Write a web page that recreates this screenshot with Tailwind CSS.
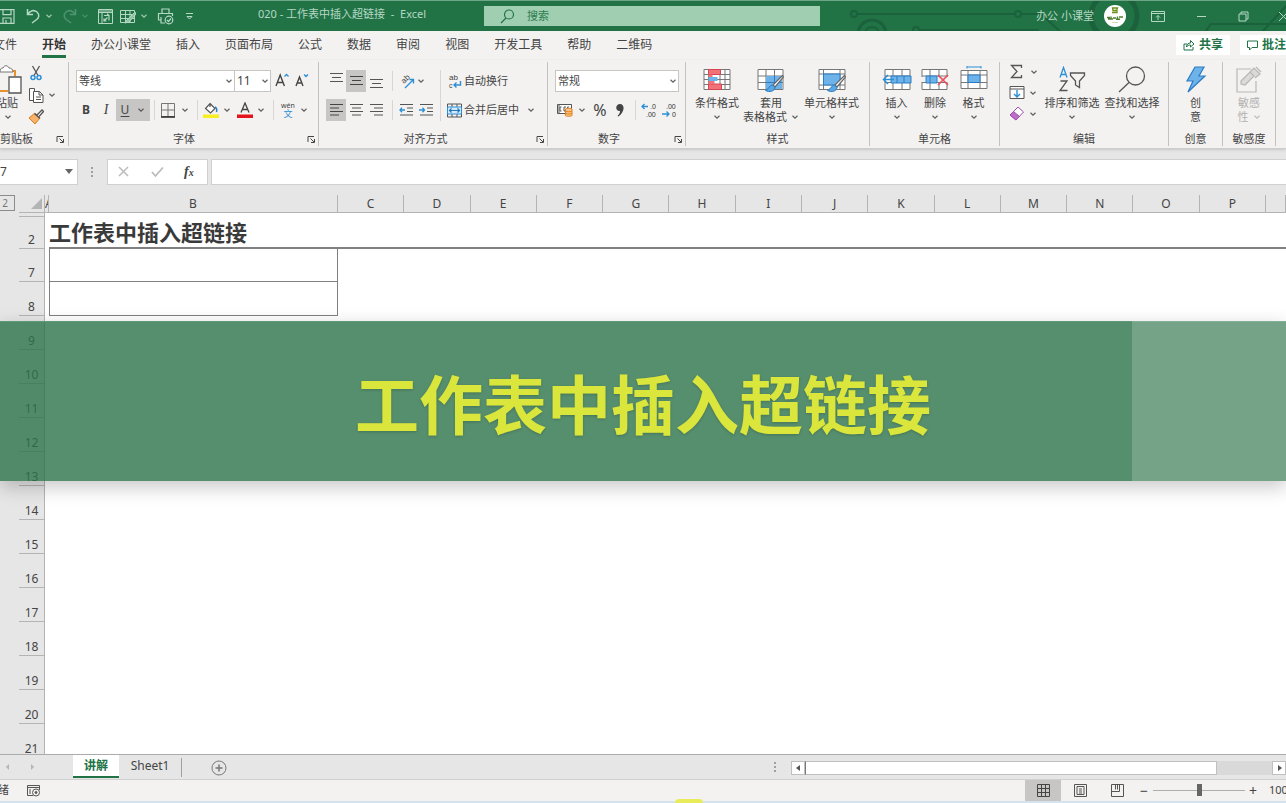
<!DOCTYPE html>
<html lang="zh-CN">
<head>
    <meta charset="UTF-8">
    <meta name="viewport" content="width=device-width, initial-scale=1.0">
    <script src="https://cdn.jsdelivr.net/npm/@tailwindcss/browser@4"></script>
    <title>020 - 工作表中插入超链接 - Excel</title>
</head>
<body class="font-['Noto_Sans','Noto_Sans_CJK_SC',sans-serif] text-[#444] bg-[#e6e6e6]">
    <svg class="hidden">
        <symbol id="chev" viewBox="0 0 8 8"><path d="M1.500 2.800 4 5.200 6.500 2.800" fill="none" stroke="currentColor" stroke-width="1.200" opacity=".85"/></symbol>
        <symbol id="launcher" viewBox="0 0 9 9"><path d="M1 7V1.500H7M3.500 3.500 7 7M7.500 4v3.500H4" fill="none" stroke="currentColor"/></symbol>
        <symbol id="brush" viewBox="0 0 20 20"><path d="M18.500 1.500 9 11l2 2 8.500-10z" fill="#fff" stroke="#666" stroke-width="1.200"/><path d="M8.500 11c-3 0-3 3.500-7 5.500 4 2 9 1 9.500-3z" fill="#5aa7e4" stroke="#2b7cc4"/></symbol>
    </svg>

    <div class="relative h-screen flex flex-col overflow-hidden">
        <!-- title bar -->
        <header class="relative h-[31px] shrink-0 bg-[#217346] border-t border-[#6fa587] flex items-center text-[#b5d8c3] text-[11px] overflow-hidden">
            <svg class="absolute right-0 top-0" width="446" height="31" viewBox="840 0 446 31" fill="none" stroke="#1b613b" stroke-width="2">
                <circle cx="854" cy="13" r="3"/><path d="M857 13h158"/><circle cx="1018" cy="13" r="3"/><path d="M1021 13h20l22 20"/>
                <circle cx="872" cy="33" r="14" stroke-width="3"/><circle cx="872" cy="33" r="7"/><circle cx="916" cy="29" r="3"/><path d="M919 29h120"/>
                <circle cx="1114" cy="15" r="23" stroke-width="5"/><path d="M1205 31l6-8h75M1262 31l24-26"/>
            </svg>
            <div class="relative w-[200px] h-full shrink-0 flex items-center">
                <button class="w-[22px]" aria-label="保存"><svg width="15" height="15" viewBox="0 0 15 15" fill="none" stroke="currentColor" stroke-width="1.200"><path d="M-1 .6h15v13.800H-1zM3 .6v5h8v-5M3 14V9h8v5M6 14v-3"/></svg></button>
                <button class="flex items-center gap-1 w-[38px] pl-1" aria-label="撤消"><svg width="15" height="16" viewBox="0 0 15 16" fill="none" stroke="currentColor" stroke-width="1.500"><path d="M1.500 1v5.500H7M1.500 6.500C4 2.500 8 1.500 11 4c3 3 2 6-1 8l-4 3"/></svg><svg width="8" height="8"><use href="#chev"/></svg></button>
                <button class="flex items-center gap-1 w-[37px] pl-[2px] text-[#4f9470]" aria-label="恢复"><svg width="15" height="16" viewBox="0 0 15 16" fill="none" stroke="currentColor" stroke-width="1.500"><path d="M13.500 1v5.500H8M13.500 6.500C11 2.500 7 1.500 4 4c-3 3-2 6 1 8l4 3"/></svg><svg width="8" height="8"><use href="#chev"/></svg></button>
                <button class="w-[23px] pl-px" aria-label="选择窗格"><svg width="15" height="15" viewBox="0 0 15 15" fill="none" stroke="currentColor"><path d="M.5.5h14v14H.5zM.5 3.500h14M4 3.500v11M1 2h13" /><path d="M6 6.500h5v5M9 4.800 11 6.500M9.500 8.500 6 12M6 9.500V12h2.500" stroke-width="1.200"/></svg></button>
                <button class="flex items-center gap-1 w-[37px]" aria-label="编辑表格"><svg width="16" height="15" viewBox="0 0 16 15" fill="none" stroke="currentColor"><path d="M.5 1.500h14v12H.5zM.5 5.500h14M.5 9.500h14M5.500 1.500v12M10 1.500v12"/><path d="M15 3 7 11l-2 3 4-1 7-8z" fill="#8fc2a4"/></svg><svg width="8" height="8"><use href="#chev"/></svg></button>
                <button class="w-[28px]" aria-label="打印预览"><svg width="17" height="17" viewBox="0 0 17 17" fill="none" stroke="currentColor" stroke-width="1.200"><path d="M5 5V1h7v4M4 12H1.500V5.500h14V8M4 9v6h4"/><circle cx="12" cy="12" r="3.800"/><path d="m10 12 1.500 1.500 2.500-3"/></svg></button>
                <button aria-label="自定义快速访问工具栏"><svg width="9" height="9" viewBox="0 0 9 9" fill="none" stroke="currentColor"><path d="M1 1.500h7M2 4.500l2.500 2.500L7 4.500z"/></svg></button>
            </div>
            <div class="relative w-[284px] shrink-0 text-center leading-4 pb-1 whitespace-pre">020 - 工作表中插入超链接  -  Excel</div>
            <label class="relative flex-1 h-5 bg-[#a0ceb0] flex items-center gap-3 pl-4 text-[#217346]">
                <svg width="15" height="15" viewBox="0 0 15 15" fill="none" stroke="currentColor" stroke-width="1.200"><circle cx="9" cy="5.500" r="4.500"/><path d="M6 9 1 14"/></svg>
                <input type="text" placeholder="搜索" aria-label="搜索" class="flex-1 min-w-0 bg-transparent outline-none placeholder:text-[#2c7d50]">
            </label>
            <div class="relative w-[466px] shrink-0 flex items-center justify-end">
                <span class="leading-4 pr-[10px]">办公 小课堂</span>
                <svg class="mr-[25px]" width="22" height="22" viewBox="0 0 22 22"><circle cx="11" cy="11" r="11" fill="#fff"/><path d="M8.500 3h5l-1 2.500H9zM8 7.500h5V5" fill="none" stroke="#6c8f1c" stroke-width="1.300"/><path d="M3 12.500h3M7 11.500v3M9 13h3M13.500 11.500v2.500M15 12h4M4 14h5M12 14.200h4" stroke="#4b7d2c" stroke-width="1.400"/><path d="M8 17.500h6" stroke="#cddfab"/></svg>
                <button class="w-[45px]" aria-label="功能区显示选项"><svg width="14" height="11" viewBox="0 0 14 11" fill="none" stroke="currentColor"><path d="M.5.5h13v10H.5zM.5 2.500h13M7 9V4.500M5 6.500l2-2 2 2"/></svg></button>
                <button class="w-10" aria-label="最小化"><svg width="11" height="11" viewBox="0 0 11 11" stroke="currentColor"><path d="M1 5.500h9"/></svg></button>
                <button class="w-[42px] pl-[2px]" aria-label="还原"><svg width="11" height="11" viewBox="0 0 11 11" fill="none" stroke="currentColor"><path d="M1 3h7v7H1zM3 3V1h7v7H8"/></svg></button>
                <button class="w-[8px]" aria-label="关闭"><svg width="11" height="11" viewBox="0 0 11 11" stroke="currentColor"><path d="m1 1 9 9M10 1l-9 9"/></svg></button>
            </div>
        </header>

        <!-- ribbon tabs -->
        <nav class="h-[29px] shrink-0 bg-[#f3f2f1] flex items-center gap-[25px] pb-px text-xs leading-5 whitespace-nowrap overflow-hidden">
            <a href="#" class="-ml-[7px]">文件</a>
            <a href="#" class="font-bold text-[#333] relative">开始<span class="absolute -bottom-[3px] inset-x-0 h-[3px] bg-[#217346]"></span></a>
            <a href="#">办公小课堂</a>
            <a href="#">插入</a>
            <a href="#">页面布局</a>
            <a href="#">公式</a>
            <a href="#">数据</a>
            <a href="#">审阅</a>
            <a href="#">视图</a>
            <a href="#">开发工具</a>
            <a href="#">帮助</a>
            <a href="#">二维码</a>
            <div class="ml-auto flex gap-[10px] text-[#217346] font-bold">
                <button class="w-[54px] h-5 bg-white flex items-center justify-center gap-1"><svg width="12" height="12" viewBox="0 0 12 12" fill="none" stroke="currentColor"><path d="M4 5H1v6h9V8M3.500 8c0-3 2-4 4-4V1.500l3.500 3.500-3.500 3V6c-2 0-3 .5-4 2z"/></svg>共享</button>
                <button class="w-[46px] h-5 bg-white flex items-center pl-[7px] gap-1"><svg class="shrink-0" width="11" height="11" viewBox="0 0 11 11" fill="none" stroke="currentColor"><path d="M.5 1h10v6.500H5L2.500 10V7.500h-2z"/></svg>批注</button>
            </div>
        </nav>

        <!-- ribbon -->
        <section class="h-[89px] shrink-0 bg-[#f3f2f1] flex pt-[2px] pb-[2px] text-[11px] leading-[14px] whitespace-nowrap border-b border-[#cfcdcb] shadow overflow-hidden">
            <!-- clipboard -->
            <div class="w-[69px] shrink-0 border-r border-[#c4c2c0] flex flex-col">
                <div class="h-[71px] flex">
                    <button class="w-[22px] flex flex-col items-start pt-[3px]">
                        <svg width="22" height="31" viewBox="0 0 22 31" fill="none"><path d="M-2 6h17v5M-2 26h10" stroke="#e8912d" stroke-width="2"/><path d="M0 7h13c0-3-2-4-4-4-1-3-5-3-6 0-2 0-3 1-3 4z" fill="#fff" stroke="#777"/><path d="M9 12h12v16H9z" fill="#fff" stroke="#555" stroke-width="1.300"/></svg>
                        <span class="-ml-1">粘贴</span>
                        <svg class="ml-1" width="8" height="14"><use href="#chev"/></svg>
                    </button>
                    <div class="flex flex-col gap-[6px] pl-[6px] pt-[3px]">
                        <button aria-label="剪切"><svg width="16" height="16" viewBox="0 0 16 16" fill="none"><path d="M4.500 1 10 10.500M11.500 1 6 10.500" stroke="#555" stroke-width="1.300"/><circle cx="5" cy="12.500" r="2" stroke="#2b8fd6" stroke-width="1.500"/><circle cx="11" cy="12.500" r="2" stroke="#2b8fd6" stroke-width="1.500"/></svg></button>
                        <button class="flex items-center gap-1" aria-label="复制"><svg width="16" height="16" viewBox="0 0 16 16" fill="#fff" stroke="#555"><path d="M5 13.500H1.500v-12h5V4"/><path d="M5.500 4.500h6L15 8v7.500H5.500zM11 4.500V8h4M8 10h5M8 12.500h5"/></svg><svg width="8" height="8"><use href="#chev"/></svg></button>
                        <button aria-label="格式刷"><svg width="16" height="16" viewBox="0 0 16 16"><path d="M7 4 1 9l6 6 5-6z" fill="#f6b26b" stroke="#d87e1c"/><path d="m6.500 4.500 5.500 5M9 6l5-5 1.500 1.500-4.500 5" fill="#fff" stroke="#555" stroke-width="1.300"/></svg></button>
                    </div>
                </div>
                <div class="flex items-center justify-between pr-[3px]"><span>剪贴板</span><button aria-label="剪贴板设置"><svg width="9" height="9"><use href="#launcher"/></svg></button></div>
            </div>

            <!-- font -->
            <div class="w-[250px] shrink-0 border-r border-[#c4c2c0] flex flex-col">
                <div class="h-[71px] pl-[7px] pt-2">
                    <div class="flex items-center h-[22px]">
                        <span class="relative"><select aria-label="字体" class="appearance-none w-[159px] h-[22px] bg-white border border-[#c8c6c4] pl-[2px]"><option>等线</option></select><svg class="absolute right-[2px] top-[7px] pointer-events-none" width="8" height="8"><use href="#chev"/></svg></span>
                        <span class="relative"><select aria-label="字号" class="appearance-none w-[36px] h-[22px] bg-white border border-l-0 border-[#c8c6c4] pl-[2px] text-xs"><option>11</option></select><svg class="absolute right-[2px] top-[7px] pointer-events-none" width="8" height="8"><use href="#chev"/></svg></span>
                        <button class="ml-1" aria-label="增大字号"><svg width="14" height="18" viewBox="0 0 14 18" fill="none"><path d="M1 14 5.200 3 9.400 14M2.500 10.500h5.500" stroke="#444" stroke-width="1.400"/><path d="M9.500 4.500 11.500 2.500 13.500 4.500" stroke="#2b8fd6" stroke-width="1.300"/></svg></button>
                        <button class="ml-[6px]" aria-label="减小字号"><svg width="14" height="18" viewBox="0 0 14 18" fill="none"><path d="M1 14 4.500 5 8 14M2.300 11h4.500" stroke="#444" stroke-width="1.400"/><path d="M9 2.500 11 4.500 13 2.500" stroke="#2b8fd6" stroke-width="1.300"/></svg></button>
                    </div>
                    <div class="flex items-center h-[22px] mt-[7px]">
                        <button class="w-5 font-bold text-xs">B</button>
                        <button class="w-5 italic text-sm font-['Liberation_Serif',serif]">I</button>
                        <button class="w-[34px] h-[22px] bg-[#c8c6c4] flex items-center justify-center gap-2 text-xs"><span class="underline underline-offset-2">U</span><svg width="8" height="8"><use href="#chev"/></svg></button>
                        <span class="w-px h-5 bg-[#d8d6d4] mx-1"></span>
                        <button class="flex items-center gap-[6px] pl-[2px]" aria-label="边框"><svg width="14" height="15" viewBox="0 0 14 15" fill="none" stroke="#777"><path d="M.5.5h13v13H.5zM7 .5v13M.5 7h13"/><path d="M0 14h14" stroke="#333" stroke-width="1.600"/></svg><svg width="8" height="8"><use href="#chev"/></svg></button>
                        <span class="w-px h-5 bg-[#d8d6d4] ml-2 mr-[5px]"></span>
                        <button class="flex items-center gap-1" aria-label="填充颜色"><svg width="16" height="16" viewBox="0 0 16 16" fill="none"><path d="m7 1.500 5 5-4.500 4.500-5-4.500zM7 1.500V5" fill="#fff" stroke="#555" stroke-width="1.200"/><path d="M12 5c2 1 2 3 1.500 5" stroke="#2b7cc4" stroke-width="1.500"/><path d="M0 12.500h16V16H0z" fill="#f7ef22"/></svg><svg width="8" height="8"><use href="#chev"/></svg></button>
                        <button class="flex items-center gap-1 ml-[6px]" aria-label="字体颜色"><svg width="16" height="16" viewBox="0 0 16 16" fill="none"><path d="M4 10.500 8 1l4 9.500M5.500 7.500h5" stroke="#444" stroke-width="1.300"/><path d="M0 12.500h16V16H0z" fill="#e3141b"/></svg><svg width="8" height="8"><use href="#chev"/></svg></button>
                        <span class="w-px h-5 bg-[#d8d6d4] ml-2 mr-[6px]"></span>
                        <button class="flex items-center gap-1" aria-label="拼音"><span class="flex flex-col items-center w-4 text-[7px] leading-[7px]"><span>wén</span><span class="text-[#2b8fd6] text-[9px] leading-[9px]">文</span></span><svg width="8" height="8"><use href="#chev"/></svg></button>
                    </div>
                </div>
                <div class="flex items-center pr-[2px]"><span class="flex-1 text-center pr-3 pl-1">字体</span><button aria-label="字体设置"><svg width="9" height="9"><use href="#launcher"/></svg></button></div>
            </div>

            <!-- alignment -->
            <div class="w-[229px] shrink-0 border-r border-[#c4c2c0] flex flex-col">
                <div class="h-[71px] pl-[7px] pt-2 flex">
                    <div>
                        <div class="flex items-center h-[22px]">
                            <button class="w-5 h-[22px] flex justify-center items-start pt-[2px]" aria-label="顶端对齐"><svg width="14" height="12" stroke="#555"><path d="M1 1.500h13M3 5.500h9M1 9.500h13"/></svg></button>
                            <button class="w-5 h-[22px] flex justify-center items-center bg-[#c8c6c4]" aria-label="垂直居中"><svg width="14" height="12" stroke="#444"><path d="M1 1.500h13M3 5.500h9M1 9.500h13"/></svg></button>
                            <button class="w-5 h-[22px] flex justify-center items-end pb-[2px]" aria-label="底端对齐"><svg width="14" height="12" stroke="#555"><path d="M1 1.500h13M3 5.500h9M1 9.500h13"/></svg></button>
                            <span class="w-px h-5 bg-[#d8d6d4] mx-[6px]"></span>
                            <button class="flex items-center gap-[2px]" aria-label="方向"><svg class="overflow-visible font-['Liberation_Sans',sans-serif]" width="16" height="16" viewBox="0 0 16 16" fill="none"><text x="5" y="11" transform="rotate(-45 5 11)" font-size="8" fill="#444">ab</text><path d="m6 15 8.500-8.500M10.500 6.500h4v4" stroke="#2b8fd6" stroke-width="1.300"/></svg><svg width="8" height="8"><use href="#chev"/></svg></button>
                        </div>
                        <div class="flex items-center h-[22px] mt-[7px]">
                            <button class="w-5 h-[22px] flex justify-center items-center bg-[#c8c6c4]" aria-label="左对齐"><svg width="14" height="14" stroke="#444"><path d="M1 1.500h13M1 5h9M1 8.500h13M1 12h9"/></svg></button>
                            <button class="w-5 h-[22px] flex justify-center items-center" aria-label="居中"><svg width="14" height="14" stroke="#555"><path d="M1 1.500h13M3 5h9M1 8.500h13M3 12h9"/></svg></button>
                            <button class="w-5 h-[22px] flex justify-center items-center" aria-label="右对齐"><svg width="14" height="14" stroke="#555"><path d="M1 1.500h13M5 5h9M1 8.500h13M5 12h9"/></svg></button>
                            <span class="w-px h-5 bg-[#d8d6d4] mx-[6px]"></span>
                            <button class="w-5" aria-label="减少缩进"><svg width="14" height="14" fill="none" stroke="#555"><path d="M1 1.500h13M8 5h6M8 8.500h6M1 12h13"/><path d="M6 7H1M3 4.800 1 7l2 2.200" stroke="#2b8fd6" stroke-width="1.300"/></svg></button>
                            <button class="w-5" aria-label="增加缩进"><svg width="14" height="14" fill="none" stroke="#555"><path d="M1 1.500h13M8 5h6M8 8.500h6M1 12h13"/><path d="M0 7h5.500M3.500 4.800 5.500 7l-2 2.200" stroke="#2b8fd6" stroke-width="1.300"/></svg></button>
                        </div>
                    </div>
                    <span class="w-px h-[51px] bg-[#d8d6d4] ml-[1px] mr-[6px]"></span>
                    <div>
                        <button class="flex items-center gap-[2px] h-[22px]"><svg class="font-['Liberation_Sans',sans-serif]" width="15" height="16" viewBox="0 0 15 16" fill="none"><text x="2" y="7" font-size="8" fill="#444">ab</text><text x="2" y="15" font-size="7" fill="#444">c</text><path d="M13.500 8v4H7M9.500 9.500 7 12l2.500 2.500" stroke="#2b8fd6" stroke-width="1.400"/></svg>自动换行</button>
                        <button class="flex items-center gap-[2px] h-[22px] mt-[7px]"><svg width="15" height="15" viewBox="0 0 15 15" fill="none"><path d="M.5 1h14v13H.5zM5 1v3M10 1v3M5 11v3M10 11v3" stroke="#555"/><path d="M.5 4h14v7H.5z" fill="#d4eafa" stroke="#2b8fd6"/><path d="M2.500 7.500h10M4.500 5.500l-2 2 2 2M10.500 5.500l2 2-2 2" stroke="#2378b8" stroke-width="1.200"/></svg>合并后居中<svg class="ml-[6px]" width="8" height="8"><use href="#chev"/></svg></button>
                    </div>
                </div>
                <div class="flex items-center pr-[2px]"><span class="flex-1 text-center pr-1">对齐方式</span><button aria-label="对齐设置"><svg width="9" height="9"><use href="#launcher"/></svg></button></div>
            </div>

            <!-- number -->
            <div class="w-[138px] shrink-0 border-r border-[#c4c2c0] flex flex-col">
                <div class="h-[71px] pl-[7px] pt-2">
                    <span class="relative block w-[124px]"><select aria-label="数字格式" class="appearance-none w-full h-[22px] bg-white border border-[#c8c6c4] pl-[2px]"><option>常规</option></select><svg class="absolute right-[2px] top-[7px] pointer-events-none" width="8" height="8"><use href="#chev"/></svg></span>
                    <div class="flex items-center h-[22px] mt-[7px] pl-[2px]">
                        <button class="flex items-center gap-[5px]" aria-label="会计数字格式"><svg width="16" height="14" viewBox="0 0 16 14" fill="none"><path d="M.5 1.500h14v9H.5z" fill="#fff" stroke="#555"/><path d="M4.500 4H3v4h1.500M9 4H7v4h2M2 2v8M12 4h-1.500v3" stroke="#555"/><path d="M8.500 6c0-1 6.500-1 6.500 0v6.500c0 1-6.500 1-6.500 0z" fill="#f9c58a" stroke="#e07f17"/><path d="M8.500 8c2 1 4.500 1 6.500 0M8.500 10.300c2 1 4.500 1 6.500 0" stroke="#e07f17"/></svg><svg width="8" height="8"><use href="#chev"/></svg></button>
                        <button class="w-5 ml-1 text-base leading-5 text-center">%</button>
                        <button class="w-5 flex justify-center" aria-label="千位分隔"><svg width="8" height="13" viewBox="0 0 8 13"><path d="M4 0c5 0 5 8-1.500 12.500L1.500 12C4 9.500 4 8 4 7-1 7.500-1 0 4 0z" fill="#444"/></svg></button>
                        <span class="w-px h-5 bg-[#d8d6d4] mx-[5px]"></span>
                        <button class="w-5" aria-label="增加小数位"><svg class="font-['Liberation_Sans',sans-serif]" width="16" height="16" viewBox="0 0 16 16" fill="none"><text x="9" y="7" font-size="7" fill="#333">.0</text><text x="5" y="15" font-size="7" fill="#333">.00</text><path d="M7 4.500H1M3.500 2 1 4.500 3.500 7" stroke="#2b8fd6" stroke-width="1.300"/></svg></button>
                        <button class="w-5" aria-label="减少小数位"><svg class="font-['Liberation_Sans',sans-serif]" width="16" height="16" viewBox="0 0 16 16" fill="none"><text x="5" y="7" font-size="7" fill="#333">.00</text><text x="11" y="15" font-size="7" fill="#333">0</text><path d="M1 12h7M5.500 9.500 8 12 5.500 14.500" stroke="#2b8fd6" stroke-width="1.300"/></svg></button>
                    </div>
                </div>
                <div class="flex items-center pr-[2px]"><span class="flex-1 text-center pr-1">数字</span><button aria-label="数字设置"><svg width="9" height="9"><use href="#launcher"/></svg></button></div>
            </div>

            <!-- styles -->
            <div class="w-[184px] shrink-0 border-r border-[#c4c2c0] flex flex-col">
                <div class="h-[71px] pl-1 flex">
                    <button class="w-[54px] pt-1 flex flex-col items-center justify-start">
                        <svg width="28" height="30" viewBox="0 0 28 30" fill="none"><path d="M1 3.500h26v20H1zM5.500 3.500v20M1 8.500h26M1 13.500h26M1 18.500h26M17 3.500v20M22 3.500v20" stroke="#777" fill="#fff"/><path d="M5.500 3.500h12v5h-12zM5.500 18h13v5.500h-13z" fill="#f2727a" stroke="#d64550"/><path d="M5.500 11h9v4h-9z" fill="#6db3ea"/><path d="M5.500 8.500h4V11h-4zM5.500 15h6v3h-6z" fill="#f2727a"/></svg>
                        <span>条件格式</span><svg width="8" height="14"><use href="#chev"/></svg>
                    </button>
                    <button class="w-[54px] pt-1 flex flex-col items-center justify-start">
                        <svg width="28" height="30" viewBox="0 -1 28 30" fill="none"><path d="M1 2.500h25v20H1zM1 9h25M1 15.500h25M9 2.500v20M17.500 2.500v20" stroke="#777" fill="#fff"/><path d="M9 9h16v13H9z" fill="#6db3ea"/><path d="M17.500 9v13M9 15.500h16" stroke="#2b7cc4"/><use href="#brush" x="7" y="7" width="20" height="20"/></svg>
                        <span>套用</span><span class="flex items-center gap-1">表格格式<svg width="8" height="8"><use href="#chev"/></svg></span>
                    </button>
                    <button class="w-[67px] pt-1 flex flex-col items-center justify-start">
                        <svg width="28" height="30" viewBox="0 -1 28 30" fill="none"><path d="M1 2.500h26v20H1zM5.500 2.500v20M22 2.500v20M1 7h26M1 18h26" stroke="#777" fill="#fff"/><path d="M5.500 7H22v11H5.500z" fill="#6db3ea" stroke="#2b7cc4"/><use href="#brush" x="8" y="7" width="20" height="20"/></svg>
                        <span>单元格样式</span><svg width="8" height="14"><use href="#chev"/></svg>
                    </button>
                </div>
                <span class="text-center">样式</span>
            </div>

            <!-- cells -->
            <div class="w-[130px] shrink-0 border-r border-[#c4c2c0] flex flex-col">
                <div class="h-[71px] pl-[7px] flex">
                    <button class="w-[39px] pt-1 flex flex-col items-center justify-start">
                        <svg width="30" height="30" viewBox="0 -1 30 30" fill="none"><path d="M3 2.500h25v20H3zM3 9h25M3 15.500h25M11 2.500v20M20 2.500v20" stroke="#777" fill="#fff"/><path d="M9 9h20v7H9z" fill="#6db3ea" stroke="#2b7cc4"/><path d="M15 9v7M22 9v7" stroke="#2b7cc4"/><path d="M12 12.500H1.500M6 8l-4.500 4.500L6 17" stroke="#2b8fd6" stroke-width="1.500"/></svg>
                        <span>插入</span><svg width="8" height="14"><use href="#chev"/></svg>
                    </button>
                    <button class="w-[38px] pt-1 flex flex-col items-center justify-start">
                        <svg width="28" height="30" viewBox="0 -1 28 30" fill="none"><path d="M1 2.500h25v20H1zM1 9h25M1 15.500h25M9 2.500v20M18 2.500v20" stroke="#777" fill="#fff"/><path d="M0 10h4v5H0zM16.500 10H28v5H16.500z" fill="#f3f2f1"/><path d="M5 9h11v7H5z" fill="#6db3ea" stroke="#2b7cc4"/><path d="M9 9v7" stroke="#2b7cc4"/><path d="m17 8 10 10M27 8 17 18" stroke="#e8505b" stroke-width="1.700"/></svg>
                        <span>删除</span><svg width="8" height="14"><use href="#chev"/></svg>
                    </button>
                    <button class="w-[39px] pt-1 flex flex-col items-center justify-start">
                        <svg width="28" height="30" viewBox="0 0 28 30" fill="none"><path d="M1 4.500h26v18H1zM1 9h26M1 16.500h26M8 4.500v18M20 4.500v18" stroke="#777" fill="#fff"/><path d="M8 9h12v7.500H8z" fill="#6db3ea" stroke="#2b7cc4"/><path d="M7 1h14M7 0v2.500M21 0v2.500" stroke="#2b8fd6"/></svg>
                        <span>格式</span><svg width="8" height="14"><use href="#chev"/></svg>
                    </button>
                </div>
                <span class="text-center">单元格</span>
            </div>

            <!-- editing -->
            <div class="w-[169px] shrink-0 border-r border-[#c4c2c0] flex flex-col">
                <div class="h-[71px] pl-[9px] flex">
                    <div class="w-[33px] flex flex-col gap-[6px] pt-[2px]">
                        <button class="flex items-center gap-[6px]" aria-label="自动求和"><svg width="15" height="15" viewBox="0 0 15 15" fill="none" stroke="#555" stroke-width="1.300"><path d="M12.500 4V1.500H2.500L8 7.500l-5.500 6h10V11"/></svg><svg width="8" height="8"><use href="#chev"/></svg></button>
                        <button class="flex items-center gap-1" aria-label="填充"><svg width="16" height="15" viewBox="0 0 16 15" fill="none"><path d="M1 1.500h14v12H1zM1 4h14" stroke="#555" fill="#fff"/><path d="M8 5v7M5 9l3 3 3-3" stroke="#2b8fd6" stroke-width="1.400"/></svg><svg width="8" height="8"><use href="#chev"/></svg></button>
                        <button class="flex items-center gap-1" aria-label="清除"><svg width="16" height="15" viewBox="0 0 16 15"><path d="M9 1 14.500 6 7 14 1 9z" fill="#fff" stroke="#9b4fa8"/><path d="m4.500 5.500 6 5L7 14 1 9z" fill="#bd6cc9" stroke="#9b4fa8"/></svg><svg width="8" height="8"><use href="#chev"/></svg></button>
                    </div>
                    <button class="w-[60px] pt-1 flex flex-col items-center justify-start">
                        <svg width="28" height="30" viewBox="0 0 28 30" fill="none"><path d="M2 11.500 5.500 1.500 9 11.500M3.200 8.500h4.600" stroke="#2b8fd6" stroke-width="1.300"/><path d="M2.500 15h6.500l-7 9.500h7.500" stroke="#555" stroke-width="1.300"/><path d="M12.500 7h14v2.500L21.500 15v6.500l-4-2.500v-4l-5-5.500z" stroke="#555" stroke-width="1.300"/></svg>
                        <span>排序和筛选</span><svg width="8" height="14"><use href="#chev"/></svg>
                    </button>
                    <button class="w-[60px] pt-1 flex flex-col items-center justify-start">
                        <svg width="28" height="30" viewBox="0 0 28 30" fill="none" stroke="#555" stroke-width="1.300"><circle cx="17.500" cy="10" r="9"/><path d="M11 16.500 1 26"/></svg>
                        <span>查找和选择</span><svg width="8" height="14"><use href="#chev"/></svg>
                    </button>
                </div>
                <span class="text-center">编辑</span>
            </div>

            <!-- ideas -->
            <div class="w-[54px] shrink-0 border-r border-[#c4c2c0] flex flex-col">
                <button class="h-[71px] pt-1 flex flex-col items-center justify-start">
                    <svg width="22" height="30" viewBox="0 0 22 30"><path d="M10 1h9l-5 9h6L3 26l5-11H2z" fill="#6db3ea" stroke="#2b7cc4" stroke-width="1.200"/></svg>
                    <span>创</span><span>意</span>
                </button>
                <span class="text-center">创意</span>
            </div>

            <!-- sensitivity -->
            <div class="w-[53px] shrink-0 border-r border-[#c4c2c0] flex flex-col">
                <button disabled class="h-[71px] pt-1 flex flex-col items-center justify-start text-[#b3b1af]">
                    <svg width="26" height="30" viewBox="0 0 26 30" fill="none" stroke="#b9b7b5" stroke-width="1.200"><path d="M15 3H1v23h19V15"/><path d="m5 15 9-9 4 4-9 9-4-1zM14 6l4-4 6 6-5 4M20 1l5 5" fill="#dcdad8"/></svg>
                    <span>敏感</span><span class="flex items-center gap-1">性<svg width="8" height="8"><use href="#chev"/></svg></span>
                </button>
                <span class="text-center">敏感度</span>
            </div>
        </section>

        <!-- formula bar -->
        <div class="shrink-0 flex items-center h-[26px] mt-[10px] text-xs">
            <div class="w-[78px] h-[26px] bg-white border border-l-0 border-[#d0d0d0] flex items-center justify-between pr-1">
                <input type="text" value="7" aria-label="名称框" class="w-10 bg-transparent outline-none">
                <svg width="8" height="6"><path d="M0 0h8L4 5z" fill="#666"/></svg>
            </div>
            <svg class="mx-[13px]" width="3" height="13" fill="#a0a0a0"><path d="M0 1h2v2H0zM0 5h2v2H0zM0 9h2v2H0z"/></svg>
            <div class="w-[101px] h-[26px] bg-white border border-[#d0d0d0] flex items-center pl-[10px]">
                <button class="w-[33px]" aria-label="取消"><svg width="12" height="12" stroke="#bbb" stroke-width="1.500"><path d="m1 1 9 9M10 1l-9 9"/></svg></button>
                <button class="w-[33px]" aria-label="输入"><svg width="13" height="12" fill="none" stroke="#bbb" stroke-width="1.800"><path d="m1 6 3.500 4L12 1.500"/></svg></button>
                <button class="italic font-bold text-sm leading-4 font-['Liberation_Serif',serif]">f<span class="text-[10px]">x</span></button>
            </div>
            <input type="text" aria-label="编辑栏" class="flex-1 min-w-0 h-[26px] ml-[3px] bg-white border border-r-0 border-[#d0d0d0] outline-none px-2">
        </div>

        <!-- worksheet -->
        <main class="flex-1 min-h-0 overflow-hidden flex pt-[10px] border-b border-[#ababab] text-xs">
            <div class="w-[19px] shrink-0"><button class="w-[15px] h-4 border border-l-0 border-[#8c8c8c] text-[10px] leading-3 text-[#777] pr-1 block">2</button></div>
            <table class="flex-1 table-fixed border-separate border-spacing-0 self-start w-full">
                <colgroup>
                    <col class="w-[26px]"><col class="w-1"><col class="w-[289px]">
                    <col><col><col><col><col><col><col><col><col><col><col><col><col><col>
                    <col class="w-5">
                </colgroup>
                <thead>
                    <tr class="h-[18px] leading-4 *:p-0 *:font-normal *:align-bottom *:border-b *:border-r *:border-[#b4b4b4] *:overflow-hidden">
                        <th><svg class="ml-3 mb-[3px]" width="11" height="11"><path d="M11 0v11H0z" fill="#b4b4b4"/></svg></th>
                        <th>A</th><th>B</th><th>C</th><th>D</th><th>E</th><th>F</th><th>G</th><th>H</th><th>I</th><th>J</th><th>K</th><th>L</th><th>M</th><th>N</th><th>O</th><th>P</th><th></th>
                    </tr>
                </thead>
                <tbody class="[&_th]:font-normal [&_th]:p-0 [&_th]:align-bottom [&_th]:leading-4 [&_th]:border-b [&_th]:border-r [&_th]:border-[#b4b4b4] [&_td]:p-0 [&_td]:bg-white">
                    <tr class="h-1"><th class="h-1"></th><td colspan="17"></td></tr>
                    <tr class="h-8"><th>2</th><td></td><td colspan="16" class="border-b-2 border-[#808080] pl-1 text-[22px] leading-7 font-bold text-[#3a3a3a]">工作表中插入超链接</td></tr>
                    <tr class="h-[33px]"><th>7</th><td></td><td class="border border-t-0 border-[#808080]"></td><td colspan="15"></td></tr>
                    <tr class="h-[34px]"><th>8</th><td></td><td class="border border-t-0 border-[#808080]"></td><td colspan="15"></td></tr>
                    <tr class="h-[34px]"><th>9</th><td colspan="17"></td></tr>
                    <tr class="h-[34px]"><th>10</th><td colspan="17"></td></tr>
                    <tr class="h-[34px]"><th>11</th><td colspan="17"></td></tr>
                    <tr class="h-[34px]"><th>12</th><td colspan="17"></td></tr>
                    <tr class="h-[34px]"><th>13</th><td colspan="17"></td></tr>
                    <tr class="h-[34px]"><th>14</th><td colspan="17"></td></tr>
                    <tr class="h-[34px]"><th>15</th><td colspan="17"></td></tr>
                    <tr class="h-[34px]"><th>16</th><td colspan="17"></td></tr>
                    <tr class="h-[34px]"><th>17</th><td colspan="17"></td></tr>
                    <tr class="h-[34px]"><th>18</th><td colspan="17"></td></tr>
                    <tr class="h-[34px]"><th>19</th><td colspan="17"></td></tr>
                    <tr class="h-[34px]"><th>20</th><td colspan="17"></td></tr>
                    <tr class="h-[34px]"><th>21</th><td colspan="17"></td></tr>
                </tbody>
            </table>
        </main>

        <!-- sheet tabs -->
        <div class="h-[25px] shrink-0 flex items-start text-xs border-b border-[#d0d0d0]">
            <div class="w-[73px] flex items-center gap-5 pl-[5px] pt-2">
                <button aria-label="上一个"><svg class="block" width="5" height="8"><path d="M4 1v6L1 4z" fill="#b4b4b4"/></svg></button>
                <button aria-label="下一个"><svg class="block" width="5" height="8"><path d="M1 1v6l3-3z" fill="#b4b4b4"/></svg></button>
            </div>
            <button class="w-[46px] h-[23px] bg-white border-b-2 border-[#217346] text-[#217346] font-bold leading-5">讲解</button>
            <button class="w-[62px] leading-[22px]">Sheet1</button>
            <span class="w-px h-[19px] mt-[3px] bg-[#a0a0a0]"></span>
            <button class="ml-[29px] mt-[5px]" aria-label="新工作表"><svg class="block" width="16" height="16" fill="none" stroke="#777"><circle cx="8" cy="8" r="7"/><path d="M4.500 8h7M8 4.500v7" stroke-width="1.500"/></svg></button>
            <svg class="ml-auto mt-[7px] mr-[14px]" width="3" height="13" fill="#a0a0a0"><path d="M0 0h2v2H0zM0 4h2v2H0zM0 8h2v2H0z"/></svg>
            <div class="w-[495px] h-[14px] mt-[6px] bg-[#d9d9d9] flex">
                <button class="w-[14px] bg-white border border-[#c0c0c0] flex items-center justify-center" aria-label="向左滚动"><svg width="5" height="8"><path d="M4 1v6L0 4z" fill="#555"/></svg></button>
                <div class="w-[412px] bg-white border border-[#c0c0c0] border-l-[#777]"></div>
                <button class="w-[14px] ml-auto bg-white border border-[#c0c0c0] flex items-center justify-center" aria-label="向右滚动"><svg width="5" height="8"><path d="M1 1v6l4-3z" fill="#555"/></svg></button>
            </div>
        </div>

        <!-- status bar -->
        <footer class="relative h-[23px] shrink-0 bg-[#f3f2f1] flex items-center text-[11px] border-b-2 border-[#d3e3f0] overflow-hidden">
            <span class="-ml-[13px] whitespace-nowrap">就绪</span>
            <svg class="ml-[18px]" width="14" height="13" fill="none" stroke="#555"><path d="M6 11.500H.5v-10h12V6M.5 3.500h12M3 5v5"/><circle cx="9" cy="8.500" r="3.500"/><circle cx="9" cy="8.500" r="1" fill="#555"/></svg>
            <div class="ml-auto flex items-center h-full">
                <button class="w-9 h-full bg-[#c8c6c4] flex items-center justify-center" aria-label="普通"><svg width="13" height="13" fill="none" stroke="#444"><path d="M.5.5h12v12H.5zM4.500.5v12M8.500.5v12M.5 4.500h12M.5 8.500h12"/></svg></button>
                <button class="w-[38px] flex justify-center" aria-label="页面布局"><svg width="13" height="13" fill="none" stroke="#555"><path d="M.5.5h12v12H.5zM3 2.500h7v8H3zM5 5h3M5 7h3M5 9h3"/></svg></button>
                <button class="w-9 flex justify-center" aria-label="分页预览"><svg width="13" height="13" fill="none" stroke="#555"><path d="M.5.5h12v12H.5zM4.500.5v5M8.500.5v7M.5 7.500h8M6.500.5v5"/></svg></button>
                <button class="w-[18px] text-sm leading-4 text-center">−</button>
                <input type="range" min="10" max="190" value="100" aria-label="缩放" class="appearance-none w-[92px] h-3 bg-transparent [&::-webkit-slider-runnable-track]:h-px [&::-webkit-slider-runnable-track]:bg-[#b0aeac] [&::-webkit-slider-thumb]:appearance-none [&::-webkit-slider-thumb]:w-[5px] [&::-webkit-slider-thumb]:h-3 [&::-webkit-slider-thumb]:-mt-[6px] [&::-webkit-slider-thumb]:bg-[#666]">
                <button class="w-6 pr-2 text-sm leading-4 text-center">+</button>
                <span class="w-[17px] overflow-hidden">100%</span>
            </div>
        </footer>
        <span class="absolute bottom-0 left-1/2 ml-8 w-7 h-1 rounded-t-full bg-[#e8ec5a]"></span>

        <!-- caption banner -->
        <div class="absolute inset-x-0 top-[321px] h-[160px] flex shadow-[0_6px_18px_rgba(0,0,0,0.22)]">
            <div class="flex-1 bg-[#2c734a]/80 border-t border-[#5f9a78]"></div>
            <div class="w-[154px] bg-[#2c734a]/66 border-t border-[#84b096]"></div>
            <h1 class="absolute inset-0 flex items-center justify-center text-[64px] leading-[80px] font-bold text-[#dbe63c] pt-2 [text-shadow:0_1px_3px_rgba(0,0,0,0.2)]">工作表中插入超链接</h1>
        </div>
    </div>
</body>
</html>
